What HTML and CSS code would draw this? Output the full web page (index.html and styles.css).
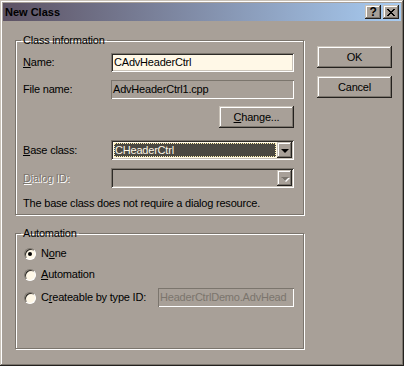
FILE: index.html
```html
<!DOCTYPE html>
<html>
<head lang="en">
    <meta charset="UTF-8">
    <title>New Class</title>
    <link rel="stylesheet" href="styles.css">
</head>
<body>
<div class="window">
    <div class="titlebar">
        <span class="title">New Class</span>
        <span class="caption-btn help">?</span>
        <span class="caption-btn close">
            <svg width="8" height="7" viewBox="0 0 8 7"><path d="M0 0h2v1h1v1h2V1h1V0h2v1H7v1H6v1H5v1h1v1h1v1h1v1H6V6H5V5H3v1H2v1H0V6h1V5h1V4h1V3H2V2H1V1H0z" fill="#000"/></svg>
        </span>
    </div>
    <div class="dialog-body">
        <div class="left-col">
            <fieldset class="group group-class">
                <legend>Class information</legend>
                <div class="row">
                    <label class="label"><u>N</u>ame:</label>
                    <div class="edit">CAdvHeaderCtrl</div>
                </div>
                <div class="row row-file">
                    <span class="label">File name:</span>
                    <div class="static-box">AdvHeaderCtrl1.cpp</div>
                </div>
                <div class="row row-change">
                    <button class="btn"><u>C</u>hange...</button>
                </div>
                <div class="row row-base">
                    <label class="label"><u>B</u>ase class:</label>
                    <div class="combo">
                        <div class="combo-text"><span class="selected">CHeaderCtrl</span></div>
                        <span class="combo-btn"><span class="arrow"></span></span>
                    </div>
                </div>
                <div class="row row-dialog">
                    <label class="label disabled"><u>D</u>ialog ID:</label>
                    <div class="combo combo-disabled">
                        <div class="combo-text"></div>
                        <span class="combo-btn"><span class="arrow"></span></span>
                    </div>
                </div>
                <p class="note">The base class does not require a dialog resource.</p>
            </fieldset>
            <fieldset class="group group-auto">
                <legend>Automation</legend>
                <div class="radio-row">
                    <span class="radio checked"></span>
                    <span>N<u>o</u>ne</span>
                </div>
                <div class="radio-row row-automation">
                    <span class="radio"></span>
                    <span><u>A</u>utomation</span>
                </div>
                <div class="radio-row row-create">
                    <span class="radio"></span>
                    <span>C<u>r</u>eateable by type ID:</span>
                    <div class="type-box">HeaderCtrlDemo.AdvHead</div>
                </div>
            </fieldset>
        </div>
        <div class="right-col">
            <button class="btn btn-ok">OK</button>
            <button class="btn">Cancel</button>
        </div>
    </div>
</div>
</body>
</html>
```

FILE: styles.css
```css
body {
    margin: 0;
    background: #a8a098;
    font-family: "Liberation Sans", Arial, sans-serif;
    font-size: 11px;
    letter-spacing: -0.2px;
    line-height: 13px;
    color: #000;
}
p, u {
    margin: 0;
}
.window {
    width: 404px;
    height: 366px;
    box-sizing: border-box;
    padding: 3px;
    background: #a8a098;
    box-shadow: inset -1px -1px 0 #24211e, inset 1px 1px 0 #c9c2b8, inset -2px -2px 0 #7b756d, inset 2px 2px 0 #fff;
    display: flex;
    flex-direction: column;
}
.titlebar {
    height: 18px;
    display: flex;
    align-items: center;
    padding: 0 2px;
    background: linear-gradient(to right, #5d5263, #a8ccf2);
}
.title {
    flex: 1;
    font-weight: bold;
    letter-spacing: 0;
}
.caption-btn {
    width: 16px;
    height: 14px;
    margin-left: 2px;
    display: flex;
    align-items: center;
    justify-content: center;
    background: #a8a098;
    font-weight: bold;
    font-size: 12px;
    box-shadow: inset -1px -1px 0 #24211e, inset 1px 1px 0 #c9c2b8, inset -2px -2px 0 #7b756d, inset 2px 2px 0 #fff;
}
.dialog-body {
    display: flex;
    gap: 13px;
    padding: 13px 0 0 12px;
}
.left-col {
    width: 289px;
    display: flex;
    flex-direction: column;
    gap: 12px;
}
.group {
    margin: 0;
    border: 1px solid #7b756d;
    box-shadow: 1px 1px 0 #fff, inset 1px 1px 0 #fff;
    min-width: 0;
}
.group legend {
    padding: 0 2px;
    line-height: 13px;
}
.group-class {
    padding: 6px 9px 4px 7px;
}
.group-class legend {
    margin-left: -2px;
}
.group-auto {
    padding: 4px 9px 41px 8px;
}
.group-auto legend {
    margin-left: -3px;
}
.row {
    display: flex;
    align-items: center;
    height: 19px;
}
.row-file {
    margin-top: 8px;
}
.row-change {
    height: 22px;
    margin-top: 7px;
    justify-content: flex-end;
}
.row-base {
    height: 20px;
    margin-top: 12px;
}
.row-dialog {
    height: 20px;
    margin-top: 8px;
}
.label {
    width: 88px;
}
.disabled {
    color: #7b756d;
    text-shadow: 1px 1px 0 #fff;
}
.edit {
    flex: 1;
    height: 19px;
    box-sizing: border-box;
    padding: 3px 3px 0;
    background: #fff8e7;
    box-shadow: inset 1px 1px 0 #7b756d, inset -1px -1px 0 #fff, inset 2px 2px 0 #2e2b27, inset -2px -2px 0 #c9c2b8;
}
.static-box {
    flex: 1;
    height: 19px;
    box-sizing: border-box;
    padding: 3px 2px 0;
    box-shadow: inset 1px 1px 0 #7b756d, inset -1px -1px 0 #fff;
}
.btn {
    width: 75px;
    height: 22px;
    padding: 0;
    border: none;
    background: #a8a098;
    font: inherit;
    letter-spacing: inherit;
    color: #000;
    box-shadow: inset -1px -1px 0 #24211e, inset 1px 1px 0 #c9c2b8, inset -2px -2px 0 #7b756d, inset 2px 2px 0 #fff;
}
.combo {
    flex: 1;
    height: 20px;
    box-sizing: border-box;
    padding: 2px;
    display: flex;
    background: #fff8e7;
    box-shadow: inset 1px 1px 0 #7b756d, inset -1px -1px 0 #fff, inset 2px 2px 0 #2e2b27, inset -2px -2px 0 #c9c2b8;
}
.combo-text {
    flex: 1;
    padding: 1px;
    display: flex;
}
.selected {
    flex: 1;
    padding: 1px 1px 0;
    background: #4b4841;
    color: #fff8e7;
    outline: 1px dotted #fff2b0;
    outline-offset: -1px;
}
.combo-btn {
    width: 15px;
    height: 16px;
    display: flex;
    align-items: center;
    justify-content: center;
    background: #a8a098;
    box-shadow: inset -1px -1px 0 #24211e, inset 1px 1px 0 #c9c2b8, inset -2px -2px 0 #7b756d, inset 2px 2px 0 #fff;
}
.arrow {
    width: 0;
    height: 0;
    border-left: 4px solid transparent;
    border-right: 4px solid transparent;
    border-top: 4px solid #000;
    margin-top: 1px;
}
.combo-disabled {
    background: #a8a098;
}
.combo-disabled .arrow {
    border-top-color: #7b756d;
    filter: drop-shadow(1px 1px 0 #fff);
}
.note {
    margin-top: 9px;
}
.radio-row {
    display: flex;
    align-items: center;
    height: 19px;
}
.row-automation {
    margin-top: 2px;
}
.row-create {
    margin-top: 4px;
}
.radio {
    position: relative;
    width: 12px;
    height: 12px;
    box-sizing: border-box;
    margin-right: 5px;
    border-radius: 50%;
    border: 1px solid;
    border-color: #7b756d #fff #fff #7b756d;
    background: #fff8e7;
    box-shadow: inset 1px 1px 0 #2e2b27;
}
.radio.checked::after {
    content: "";
    position: absolute;
    left: 3px;
    top: 3px;
    width: 4px;
    height: 4px;
    border-radius: 50%;
    background: #000;
}
.type-box {
    width: 136px;
    height: 19px;
    box-sizing: border-box;
    margin-left: auto;
    padding: 3px 2px 0;
    color: #7b756d;
    box-shadow: inset 1px 1px 0 #7b756d, inset -1px -1px 0 #fff;
}
.right-col {
    display: flex;
    flex-direction: column;
    gap: 8px;
    padding-top: 12px;
}
```
